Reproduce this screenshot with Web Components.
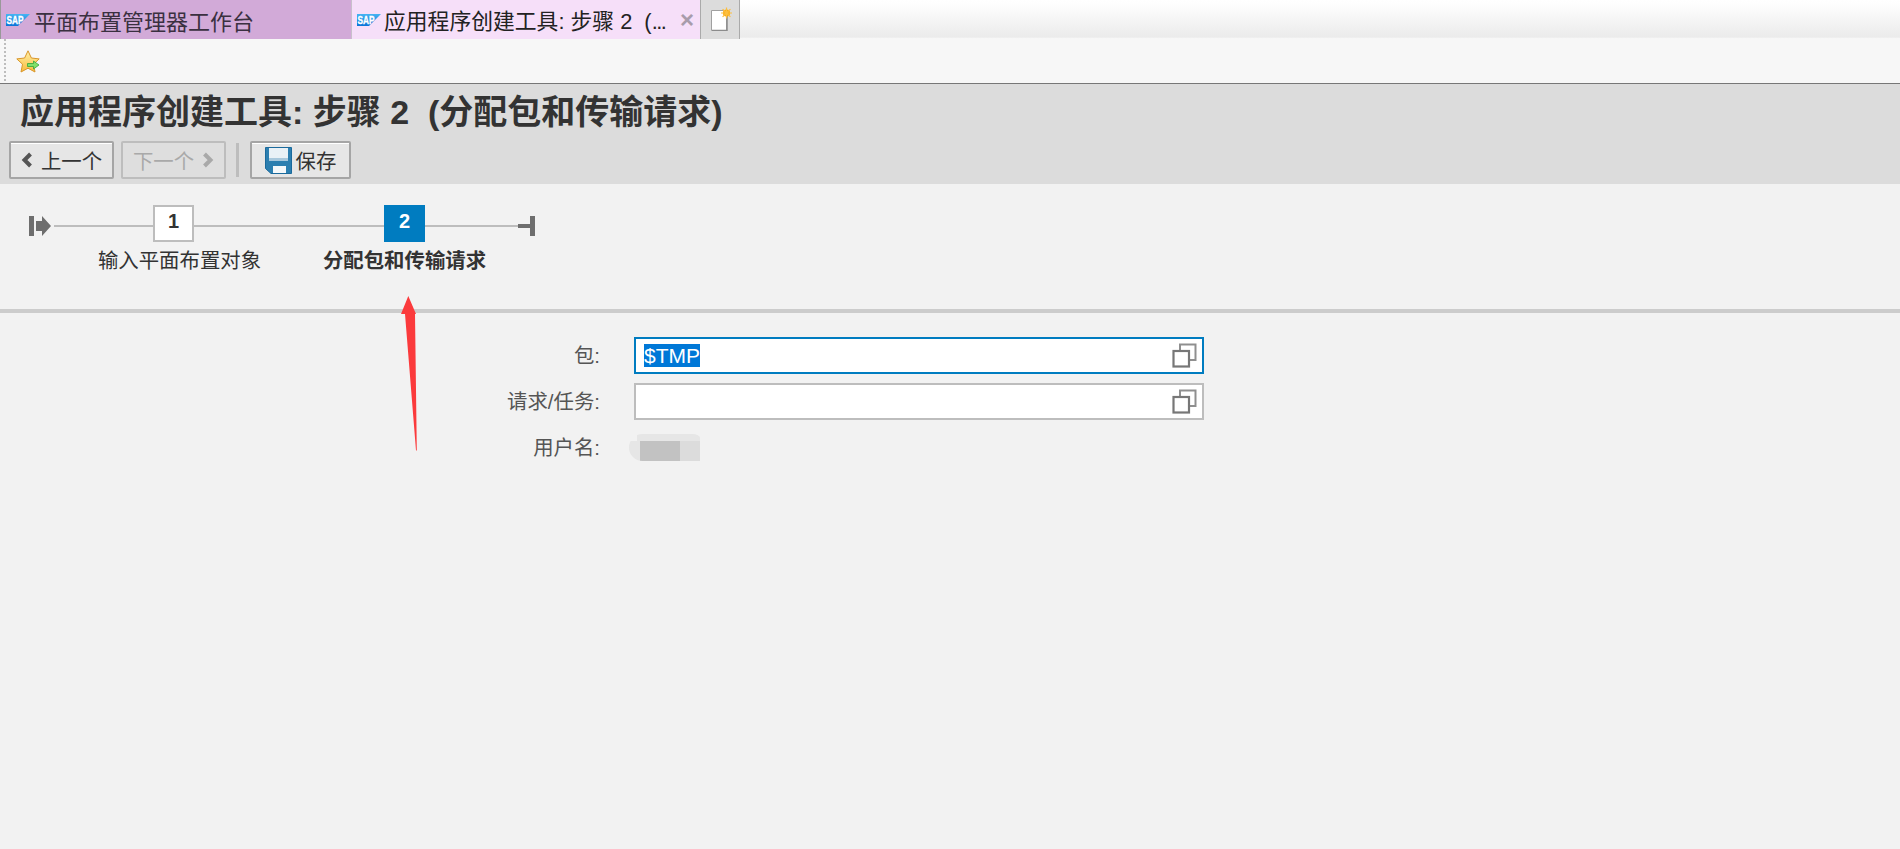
<!DOCTYPE html>
<html>
<head>
<meta charset="utf-8">
<title>应用程序创建工具</title>
<style>
  html, body { margin: 0; height: 100%; }
  body { background: #f2f2f2; font-family: "Liberation Sans", "Noto Sans CJK SC", sans-serif; color: #333; overflow: hidden; }
</style>
</head>
<body>
<sap-shell>
  <tab-bar slot="tabs"></tab-bar>
  <fav-bar slot="tabs"></fav-bar>
  <page-header></page-header>
  <road-map></road-map>
  <step-form></step-form>
</sap-shell>
<red-arrow></red-arrow>

<script>
const sapLogo = `
  <svg width="24" height="12" viewBox="0 0 24 12">
    <defs><linearGradient id="sg" x1="0" y1="0" x2="0" y2="1">
      <stop offset="0" stop-color="#46b4f2"/><stop offset="1" stop-color="#0a74d8"/>
    </linearGradient></defs>
    <path d="M0 0H24L12 12H0Z" fill="url(#sg)"/>
    <text x="0.500" y="9.600" font-family="Liberation Sans" font-weight="700" font-size="10" textLength="17" lengthAdjust="spacingAndGlyphs" fill="#fff" stroke="#fff" stroke-width=".3">SAP</text>
  </svg>`;

class SapShell extends HTMLElement {
  constructor() {
    super();
    this.attachShadow({ mode: 'open' }).innerHTML = `
      <style>
        :host { display: flex; flex-direction: column; height: 849px; }
      </style>
      <slot name="tabs"></slot>
      <slot></slot>`;
  }
}

class TabBar extends HTMLElement {
  constructor() {
    super();
    this.attachShadow({ mode: 'open' }).innerHTML = `
      <style>
        :host { display: flex; height: 39px; background: linear-gradient(#ffffff, #fdfdfd 15%, #ebebeb 95%, #fbfbfb 100%); font-size: 22px; color: #333; }
        .tab { display: flex; align-items: center; box-sizing: border-box; height: 39px; white-space: pre; }
        .one { width: 351px; background: #d2aad8; border-left: 1px solid #999; padding-left: 5px; gap: 4px; color: #3a3040; }
        .two { width: 349px; background: #f6dff9; padding-left: 5px; gap: 3px; border-left: 1px solid #c9c0cc; color: #222; }
        .two span:first-of-type { font-size: 21.800px; }
        .dots { letter-spacing: -1.500px; }
        .close { margin-left: auto; margin-right: 6px; color: #a89cab; font-size: 24px; font-weight: 700; line-height: 1; }
        .new { width: 40px; height: 39px; box-sizing: border-box; background: #dcdcdc; border-left: 1px solid #aaa; border-right: 1px solid #aaa; display: flex; align-items: center; justify-content: center; padding-left: 2px; }
        .new svg { margin-top: -4px; }
      </style>
      <div class="tab one">${sapLogo}<span>平面布置管理器工作台</span></div>
      <div class="tab two">${sapLogo}<span>应用程序创建工具: 步骤 2  (<span class="dots">...</span></span><span class="close">×</span></div>
      <div class="new">
        <svg width="26" height="26" viewBox="0 0 26 26">
          <path d="M3.500 5.500H18.500V25.500H3.500z" fill="#fff" stroke="#a0a0a0"/>
          <path d="M19 6v19.500H4" fill="none" stroke="#8c8c8c" stroke-width="1.500"/>
          <circle cx="18.500" cy="8" r="3.600" fill="#fba90f"/>
          <path d="M18.500 2.500v11M13 8h11M14.600 4.100l7.800 7.800M22.400 4.100l-7.800 7.800" stroke="#fbbf40" stroke-width="1.200"/>
        </svg>
      </div>`;
  }
}

class FavBar extends HTMLElement {
  constructor() {
    super();
    this.attachShadow({ mode: 'open' }).innerHTML = `
      <style>
        :host { display: flex; align-items: center; box-sizing: border-box; background: #f7f7f7; border-bottom: 1px solid #777; padding-left: 4px; gap: 10px; height: 45px; }
        .grip { width: 2px; height: 100%; background: repeating-linear-gradient(#bdbdbd 0 2px, transparent 2px 4px); }
        svg { display: block; margin-top: 2px; }
      </style>
      <div class="grip"></div>
      <svg width="25" height="24" viewBox="0 0 25 24">
        <defs><linearGradient id="st" x1="0" y1="0" x2="0" y2="1">
          <stop offset="0" stop-color="#fff0a8"/><stop offset="1" stop-color="#f8bc3c"/>
        </linearGradient></defs>
        <path d="M12 .8l3.400 7.200 7.800.9-5.700 5.300 1.500 7.800L12 18.200l-7 3.800 1.500-7.800L.8 8.900 8.600 8z" fill="url(#st)" stroke="#d9962a"/>
        <path d="M11.500 13.500h6v-2.500l5.500 4-5.500 4v-2.500h-6z" fill="#7fe06a" stroke="#35a53a" stroke-width=".8"/>
      </svg>`;
  }
}

class ToolButton extends HTMLElement {
  constructor() {
    super();
    this.attachShadow({ mode: 'open' }).innerHTML = `
      <style>
        :host { display: inline-flex; align-items: center; justify-content: center; box-sizing: border-box; height: 38px; border: 2px solid #a5a5a5; border-radius: 2px; background: #e6e6e6; box-shadow: inset 0 1px 0 #fff; font-size: 20.400px; color: #333; gap: 8px; }
        :host([disabled]) { color: #a9a9a9; border-color: #bdbdbd; background: #dedede; box-shadow: none; }
      </style>
      <slot></slot>`;
  }
}

class PageHeader extends HTMLElement {
  constructor() {
    super();
    this.attachShadow({ mode: 'open' }).innerHTML = `
      <style>
        :host { display: block; height: 100px; box-sizing: border-box; background: #dcdcdc; }
        h1 { margin: 0; padding: 5px 0 0 20px; height: 57px; box-sizing: border-box; font-size: 34px; line-height: 46px; font-weight: 700; color: #333; white-space: pre; }
        .bar { display: flex; align-items: center; padding-left: 9px; }
        .chev { display: block; }
        .sep { width: 3px; height: 34px; background: #bdbdbd; margin: 0 11px 0 10px; }
        tool-button.nav { width: 105px; }
        tool-button.save { width: 101px; gap: 4px; }
        tool-button + tool-button.nav { margin-left: 7px; }
      </style>
      <h1>应用程序创建工具: 步骤 2  (分配包和传输请求)</h1>
      <div class="bar">
        <tool-button class="nav">
          <svg class="chev" width="12" height="16" viewBox="0 0 12 16"><path d="M9.500 2L3.500 8l6 6" fill="none" stroke="#555" stroke-width="4"/></svg>
          <span>上一个</span>
        </tool-button>
        <tool-button class="nav" disabled>
          <span>下一个</span>
          <svg class="chev" width="12" height="16" viewBox="0 0 12 16"><path d="M2.500 2L8.500 8l-6 6" fill="none" stroke="#a9a9a9" stroke-width="4"/></svg>
        </tool-button>
        <div class="sep"></div>
        <tool-button class="save">
          <svg width="27" height="27" viewBox="0 0 27 27">
            <path d="M.5 .5h26v26H6l-5.500-5z" fill="#2c7fb0" stroke="#1b6a9c"/>
            <rect x="4" y="1" width="19" height="13" fill="#e9f1f6"/>
            <rect x="4" y="11" width="19" height="3" fill="#a8c8dc"/>
            <rect x="8" y="19" width="13" height="7" fill="#f4f8fa"/>
          </svg>
          <span>保存</span>
        </tool-button>
      </div>`;
  }
}

class RoadStep extends HTMLElement {
  constructor() {
    super();
    this.attachShadow({ mode: 'open' }).innerHTML = `
      <style>
        :host { display: block; position: relative; width: 41px; height: 37px; flex: none; margin-top: -4px; }
        .box { box-sizing: border-box; width: 100%; height: 100%; background: #fff; border: 2px solid #bdbdbd; font-size: 20px; font-weight: 700; color: #333; text-align: center; line-height: 29px; }
        :host([active]) .box { background: #007cc0; border-color: #007cc0; color: #fff; }
        /* label hangs under the box, wider than it */
        .label { position: absolute; top: 42px; left: calc(50% + var(--label-shift, 0px)); transform: translateX(-50%); white-space: nowrap; font-size: 20.400px; line-height: 28px; color: #333; }
        :host([active]) .label { font-weight: 700; }
      </style>
      <div class="box"><slot></slot></div>
      <div class="label"></div>`;
  }
  connectedCallback() {
    this.shadowRoot.querySelector('.label').textContent = this.getAttribute('label');
  }
}

class RoadMap extends HTMLElement {
  constructor() {
    super();
    this.attachShadow({ mode: 'open' }).innerHTML = `
      <style>
        :host { display: block; height: 125px; box-sizing: border-box; padding: 25px 0 0 29px; background: #f2f2f2; }
        .row { display: flex; align-items: center; height: 33px; }
        .line { height: 2px; background: #bdbdbd; flex: none; }
        svg { display: block; flex: none; }
      </style>
      <div class="row">
        <svg width="22" height="20" viewBox="0 0 22 20"><path d="M0 0h5v20H0z M7 5h6V0l9 10-9 10v-5H7z" fill="#6e6e6e"/></svg>
        <div class="line" style="width:3px;background:none"></div>
        <div class="line" style="width:99px"></div>
        <road-step label="输入平面布置对象" style="--label-shift:6px">1</road-step>
        <div class="line" style="width:190px"></div>
        <road-step label="分配包和传输请求" active>2</road-step>
        <div class="line" style="width:93px"></div>
        <svg width="17" height="20" viewBox="0 0 17 20"><path d="M0 8h12V0h5v20h-5v-8H0z" fill="#6e6e6e"/></svg>
      </div>`;
  }
}

class ValueField extends HTMLElement {
  constructor() {
    super();
    this.attachShadow({ mode: 'open' }).innerHTML = `
      <style>
        :host { display: flex; align-items: center; box-sizing: border-box; width: 570px; height: 37px; background: #fff; border: 2px solid #bdbdbd; padding: 0 5px 0 8px; font-size: 21px; color: #fff; }
        :host([focused]) { border-color: #007cc0; }
        ::slotted(span) { background: #0078d7; line-height: 23px; }
        svg { margin-left: auto; display: block; }
      </style>
      <slot></slot>
      <svg width="25" height="25" viewBox="0 0 25 25">
        <path d="M8 7V1.500h15.500V17H18" fill="none" stroke="#8f8f8f" stroke-width="2"/>
        <rect x="1.500" y="8" width="15.500" height="15.500" fill="#fff" stroke="#777" stroke-width="2.200"/>
      </svg>`;
  }
}

class StepForm extends HTMLElement {
  constructor() {
    super();
    this.attachShadow({ mode: 'open' }).innerHTML = `
      <style>
        :host { display: grid; grid-template-columns: 600px 570px; grid-auto-rows: 37px; row-gap: 9px; column-gap: 34px; border-top: 4px solid #ccc; padding-top: 24px; background: #f2f2f2; flex: 1; }
        label { font-size: 20.400px; color: #555; text-align: right; align-self: center; white-space: nowrap; margin-top: -3px; }
        .blur { width: 71px; height: 27px; margin-left: -5px; align-self: center; border-radius: 14px 8px 0 14px / 14px 4px 0 14px;
          background:
            linear-gradient(90deg, #e6e6e6 0 11px, #c2c2c2 11px 51px, #dcdcdc 51px 71px) 0 7px / 100% 20px no-repeat,
            linear-gradient(#e6e6e6, #e6e6e6) 8px 0 / 63px 7px no-repeat; }
      </style>
      <label>包:</label>
      <value-field focused><span>$TMP</span></value-field>
      <label>请求/任务:</label>
      <value-field></value-field>
      <label>用户名:</label>
      <div class="blur"></div>`;
  }
}

// annotation drawn over the screenshot
class RedArrow extends HTMLElement {
  constructor() {
    super();
    this.attachShadow({ mode: 'open' }).innerHTML = `
      <style>:host { display: block; position: absolute; left: 400px; top: 295px; width: 18px; height: 157px; }</style>
      <svg width="18" height="157" viewBox="0 0 18 157">
        <path d="M8.300 1L16 19 15 19 16.800 155.500H16L5 19 1 19z" fill="#fb3a3c"/>
      </svg>`;
  }
}

customElements.define('sap-shell', SapShell);
customElements.define('tab-bar', TabBar);
customElements.define('fav-bar', FavBar);
customElements.define('tool-button', ToolButton);
customElements.define('page-header', PageHeader);
customElements.define('road-step', RoadStep);
customElements.define('road-map', RoadMap);
customElements.define('value-field', ValueField);
customElements.define('step-form', StepForm);
customElements.define('red-arrow', RedArrow);
</script>
</body>
</html>
